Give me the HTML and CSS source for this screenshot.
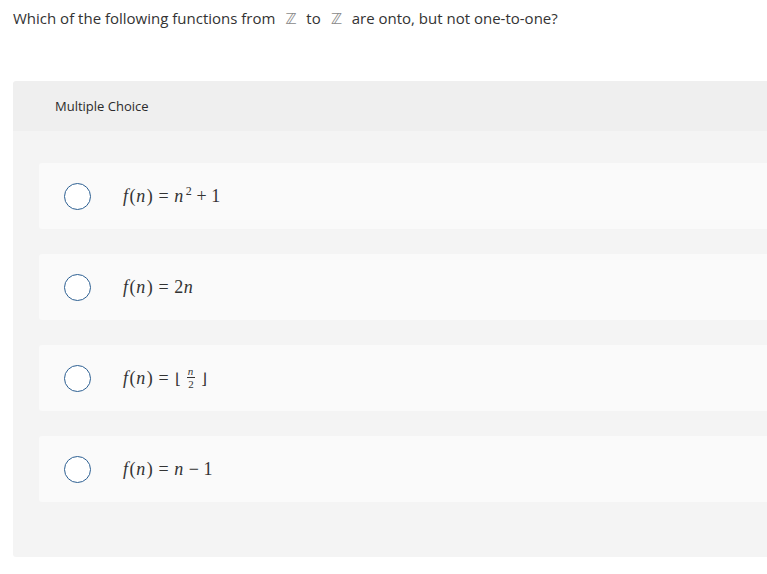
FILE: index.html
```html
<!DOCTYPE html>
<html>
<head>
<meta charset="utf-8">
<link rel="stylesheet" href="styles.css">
</head>
<body>
<p class="question">Which of the following functions from <span class="zz">ℤ</span> to <span class="zz">ℤ</span> are onto, but not one-to-one?</p>
<section class="panel">
  <div class="panel-head">Multiple Choice</div>
  <div class="panel-body">
    <div class="option">
      <span class="radio"></span>
      <span class="math"><i>f</i>(<i>n</i>)<span class="rel">=</span><i>n</i><sup>2</sup><span class="bin">+</span>1</span>
    </div>
    <div class="option">
      <span class="radio"></span>
      <span class="math"><i>f</i>(<i>n</i>)<span class="rel">=</span>2<i>n</i></span>
    </div>
    <div class="option">
      <span class="radio"></span>
      <span class="math"><i>f</i>(<i>n</i>)<span class="rel">=</span><span class="floor">⌊</span><span class="frac"><span class="num"><i>n</i></span><span class="den">2</span></span><span class="floor">⌋</span></span>
    </div>
    <div class="option">
      <span class="radio"></span>
      <span class="math"><i>f</i>(<i>n</i>)<span class="rel">=</span><i>n</i><span class="bin">−</span>1</span>
    </div>
  </div>
</section>
</body>
</html>
```

FILE: styles.css
```css
html, body {
  margin: 0;
  padding: 0;
  background: #ffffff;
}
body {
  font-family: "Open Sans", Lato, sans-serif;
  color: #333333;
  overflow: hidden;
}
.question {
  margin: 0;
  padding: 9px 0 0 13px;
  font-size: 15px;
  line-height: 18px;
  color: #333333;
}
.zz {
  font-family: "DejaVu Sans", sans-serif;
  color: #8a8a8a;
  margin: 0 6px;
  font-size: 15px;
}
.panel {
  margin: 53px 0 0 13px;
  border-radius: 3px 0 0 3px;
  overflow: hidden;
}
.panel-head {
  background: #efefef;
  height: 50px;
  display: flex;
  align-items: center;
  padding-left: 42px;
  font-size: 13px;
  color: #2b2b2b;
}
.panel-body {
  background: #f4f4f4;
  padding: 32px 0 55px 26px;
  display: flex;
  flex-direction: column;
  gap: 25px;
}
.option {
  background: #fafafa;
  height: 66px;
  border-radius: 3px 0 0 3px;
  display: flex;
  align-items: center;
  padding-left: 25px;
}
.radio {
  width: 25px;
  height: 25px;
  border: 1.5px solid #2c5f92;
  border-radius: 50%;
  background: #ffffff;
  flex: none;
}
.math {
  display: block;
  margin-left: 32px;
  font-family: "Liberation Serif", "DejaVu Serif", serif;
  font-size: 18px;
  line-height: 22px;
  color: #333333;
  white-space: nowrap;
  letter-spacing: 0.6px;
}
.math i {
  font-style: italic;
  padding-right: 1px;
}
.math sup {
  font-size: 12px;
  line-height: 0;
  vertical-align: 7px;
  margin-left: 1px;
}
.rel {
  margin: 0 5px;
}
.bin {
  margin: 0 4px;
}
.floor {
  font-size: 15px;
  margin: 0 5px 0 1px;
}
.frac {
  display: inline-block;
  vertical-align: -4px;
  text-align: center;
  font-size: 11px;
  line-height: 10px;
  margin: 0 5px 0 0;
  letter-spacing: 0;
}
.num {
  display: block;
  border-bottom: 1px solid #333333;
  padding: 0 1px 1px;
}
.den {
  display: block;
  padding-top: 1px;
}
```
